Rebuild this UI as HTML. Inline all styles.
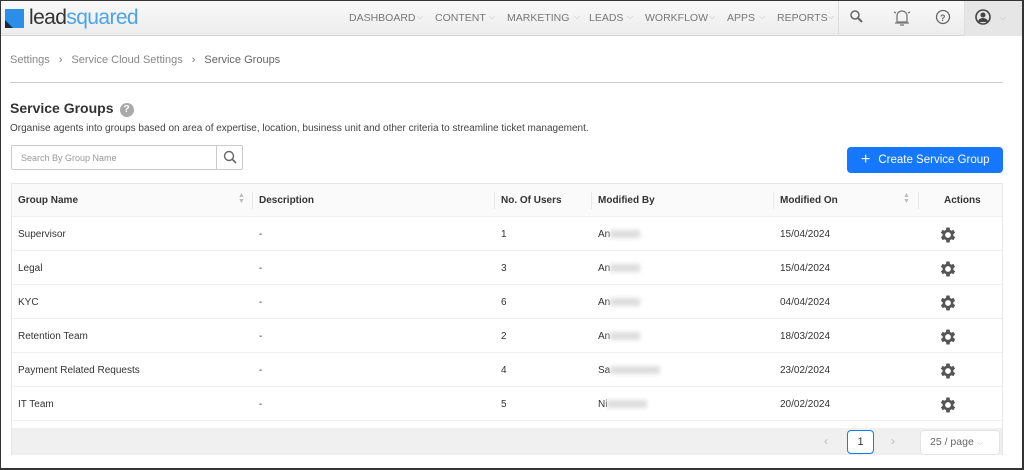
<!DOCTYPE html>
<html><head><style>
*{box-sizing:border-box;margin:0;padding:0}
body{width:1024px;height:470px;overflow:hidden;background:#fff;font-family:"Liberation Sans",Arial,sans-serif;position:relative}
.frame{position:absolute;left:0;top:0;width:1024px;height:470px;border:2px solid #333;border-left-width:1px;border-top-width:1px;pointer-events:none;z-index:9}
.nav{position:absolute;left:0;top:0;width:1022px;height:36px;background:linear-gradient(#fafafa,#ececec);border-bottom:1px solid #d6d6d6}
.logo{position:absolute;left:5px;top:7px;display:flex;align-items:center}
.sq{width:19px;height:19px;background:#2b8fe8;position:relative}
.sq:after{content:"";position:absolute;left:0;bottom:0;border-left:8px solid #1a2a3a;border-top:8px solid transparent}
.lt{font-size:21px;margin-left:5px;letter-spacing:-0.6px;color:#333;line-height:22px}
.lt span{color:#4aa3ec}
.m{position:absolute;top:12px;font-size:10.5px;color:#777;white-space:nowrap}
.ch{position:absolute;top:12px;font-size:8px;color:#bbb}
.icn{position:absolute;top:0;height:36px;border-left:1px solid #ddd}
.bc{position:absolute;left:10px;top:54px;font-size:11px;color:#888}
.bc .s{margin:0 9px;color:#777}
.bc .c{color:#666}
.hr{position:absolute;left:10px;top:82px;width:993px;height:1px;background:#ccc}
h1{position:absolute;left:10px;top:100px;font-size:14px;font-weight:bold;color:#333}
.q{display:inline-block;width:14px;height:14px;border-radius:50%;background:#aaa;color:#fff;font-size:10px;text-align:center;line-height:14px;margin-left:6px;vertical-align:1px}
.desc{position:absolute;left:10px;top:123px;font-size:10px;color:#444}
.search{position:absolute;left:11px;top:145px;width:232px;height:25px;border:1px solid #ccc;border-radius:2px}
.search span{position:absolute;left:9px;top:7px;font-size:9px;color:#999}
.search .b{position:absolute;right:0;top:0;width:26px;height:23px;border-left:1px solid #ccc}
.btn{position:absolute;left:847px;top:147px;width:156px;height:26px;background:#1677ff;border-radius:4px;color:#fff;font-size:11.5px;line-height:26px;padding-left:14px}
.btn b{font-weight:normal;font-size:16px;margin-right:8px;vertical-align:-1px}
.tbl{position:absolute;left:11px;top:183px;width:992px;height:272px;border:1px solid #e6e6e6}
.row{position:absolute;left:0;width:990px;height:34px;border-bottom:1px solid #eee;font-size:10px;color:#333}
.row div{position:absolute;top:12px}
.hd{background:#fafafa;font-weight:bold;height:33px;top:0}
.hd div{top:11px}
.sep{position:absolute;top:8px!important;width:1px;height:17px;background:#e8e8e8}
.foot{position:absolute;left:0;top:244px;width:990px;height:27px;background:#f0f0f0}
.blur{display:inline-block;width:30px;height:8px;background:#ddd;filter:blur(2px);vertical-align:-1px}
.g{left:926px!important;top:8px!important}
</style></head><body>
<svg width="0" height="0" style="position:absolute"><defs><path id="gear" fill="#555" d="M19.4 13a7.5 7.5 0 0 0 0-2l2.1-1.6-2-3.5-2.5 1a7 7 0 0 0-1.7-1L15 3h-4l-.4 2.9a7 7 0 0 0-1.7 1l-2.5-1-2 3.5L6.6 11a7.5 7.5 0 0 0 0 2l-2.1 1.6 2 3.5 2.5-1a7 7 0 0 0 1.7 1L11 21h4l.4-2.9a7 7 0 0 0 1.7-1l2.5 1 2-3.5zM13 15.5a3.5 3.5 0 1 1 0-7 3.5 3.5 0 0 1 0 7z" transform="translate(-1 0)"/></defs></svg>
<div class="nav">
<div class="logo"><div class="sq"></div><div class="lt">lead<span>squared</span></div></div>
<span class="m" style="left:349px">DASHBOARD</span><span class="ch" style="left:417px">⌵</span>
<span class="m" style="left:435px">CONTENT</span><span class="ch" style="left:489px">⌵</span>
<span class="m" style="left:507px">MARKETING</span><span class="ch" style="left:574px">⌵</span>
<span class="m" style="left:589px">LEADS</span><span class="ch" style="left:627px">⌵</span>
<span class="m" style="left:645px">WORKFLOW</span><span class="ch" style="left:709px">⌵</span>
<span class="m" style="left:727px">APPS</span><span class="ch" style="left:759px">⌵</span>
<span class="m" style="left:777px">REPORTS</span><span class="ch" style="left:828px">⌵</span>
<div class="icn" style="left:838px;width:126px">
<svg width="126" height="36"><circle cx="16" cy="15" r="4" fill="none" stroke="#666" stroke-width="1.5"/><path d="M19 18l4 4" stroke="#666" stroke-width="2"/>
<path d="M58 22v-6a5 5 0 0 1 10 0v6zM56 23h14M61 25h4M55 12l2 1M71 12l-2 1" fill="none" stroke="#777" stroke-width="1.3"/>
<circle cx="104" cy="17" r="6.5" fill="none" stroke="#666" stroke-width="1.3"/><text x="101" y="21" font-size="9" font-weight="bold" fill="#666">?</text></svg></div>
<div class="icn" style="left:964px;width:58px;background:#e6e6e6"><svg width="56" height="36"><circle cx="18" cy="17" r="7" fill="none" stroke="#444" stroke-width="1.6"/><circle cx="18" cy="15" r="2.5" fill="#444"/><path d="M13 22a5 4 0 0 1 10 0" fill="#444"/><text x="35" y="20" font-size="8" fill="#bbb">⌵</text></svg></div>
</div>
<div class="bc">Settings<span class="s">›</span>Service Cloud Settings<span class="s">›</span><span class="c">Service Groups</span></div>
<div class="hr"></div>
<h1>Service Groups<span class="q">?</span></h1>
<div class="desc">Organise agents into groups based on area of expertise, location, business unit and other criteria to streamline ticket management.</div>
<div class="search"><span>Search By Group Name</span><div class="b"><svg width="26" height="23"><circle cx="12" cy="10" r="4.5" fill="none" stroke="#666" stroke-width="1.4"/><path d="M15.5 13.5l3.5 3.5" stroke="#666" stroke-width="1.6"/></svg></div></div>
<div class="btn"><b>+</b>Create Service Group</div>
<div class="tbl">
<div class="row hd"><div style="left:6px">Group Name</div><div style="left:226px;top:9px;color:#bbb;font-size:7px;line-height:6px">▲<br>▼</div><div class="sep" style="left:240px"></div><div style="left:247px">Description</div><div class="sep" style="left:482px"></div><div style="left:489px">No. Of Users</div><div class="sep" style="left:579px"></div><div style="left:586px">Modified By</div><div class="sep" style="left:761px"></div><div style="left:768px">Modified On</div><div style="left:891px;top:9px;color:#bbb;font-size:7px;line-height:6px">▲<br>▼</div><div class="sep" style="left:906px"></div><div style="left:932px;font-weight:bold">Actions</div></div>
<div class="row" style="top:33px"><div style="left:6px">Supervisor</div><div style="left:247px">-</div><div style="left:489px">1</div><div style="left:586px">An<span class="blur"></span></div><div style="left:768px">15/04/2024</div><div class="g"><svg width="20" height="20" viewBox="0 0 24 24"><use href="#gear"/></svg></div></div>
<div class="row" style="top:67px"><div style="left:6px">Legal</div><div style="left:247px">-</div><div style="left:489px">3</div><div style="left:586px">An<span class="blur"></span></div><div style="left:768px">15/04/2024</div><div class="g"><svg width="20" height="20" viewBox="0 0 24 24"><use href="#gear"/></svg></div></div>
<div class="row" style="top:101px"><div style="left:6px">KYC</div><div style="left:247px">-</div><div style="left:489px">6</div><div style="left:586px">An<span class="blur"></span></div><div style="left:768px">04/04/2024</div><div class="g"><svg width="20" height="20" viewBox="0 0 24 24"><use href="#gear"/></svg></div></div>
<div class="row" style="top:135px"><div style="left:6px">Retention Team</div><div style="left:247px">-</div><div style="left:489px">2</div><div style="left:586px">An<span class="blur"></span></div><div style="left:768px">18/03/2024</div><div class="g"><svg width="20" height="20" viewBox="0 0 24 24"><use href="#gear"/></svg></div></div>
<div class="row" style="top:169px"><div style="left:6px">Payment Related Requests</div><div style="left:247px">-</div><div style="left:489px">4</div><div style="left:586px">Sa<span class="blur" style="width:50px"></span></div><div style="left:768px">23/02/2024</div><div class="g"><svg width="20" height="20" viewBox="0 0 24 24"><use href="#gear"/></svg></div></div>
<div class="row" style="top:203px"><div style="left:6px">IT Team</div><div style="left:247px">-</div><div style="left:489px">5</div><div style="left:586px">Ni<span class="blur" style="width:40px"></span></div><div style="left:768px">20/02/2024</div><div class="g"><svg width="20" height="20" viewBox="0 0 24 24"><use href="#gear"/></svg></div></div>
<div class="foot">
<div style="position:absolute;left:812px;top:6px;font-size:12px;color:#bbb">‹</div>
<div style="position:absolute;left:835px;top:2px;width:27px;height:24px;border:1px solid #1677ff;border-radius:4px;background:#fff;font-size:11px;text-align:center;line-height:22px;color:#333">1</div>
<div style="position:absolute;left:879px;top:6px;font-size:12px;color:#bbb">›</div>
<div style="position:absolute;left:908px;top:2px;width:80px;height:25px;border:1px solid #e3e3e3;border-radius:4px;background:#fff;font-size:10.5px;line-height:23px;padding-left:9px;color:#666">25 / page <span style="color:#bbb;font-size:8px">⌵</span></div>
</div>
</div>
<div class="frame"></div>
</body></html>
